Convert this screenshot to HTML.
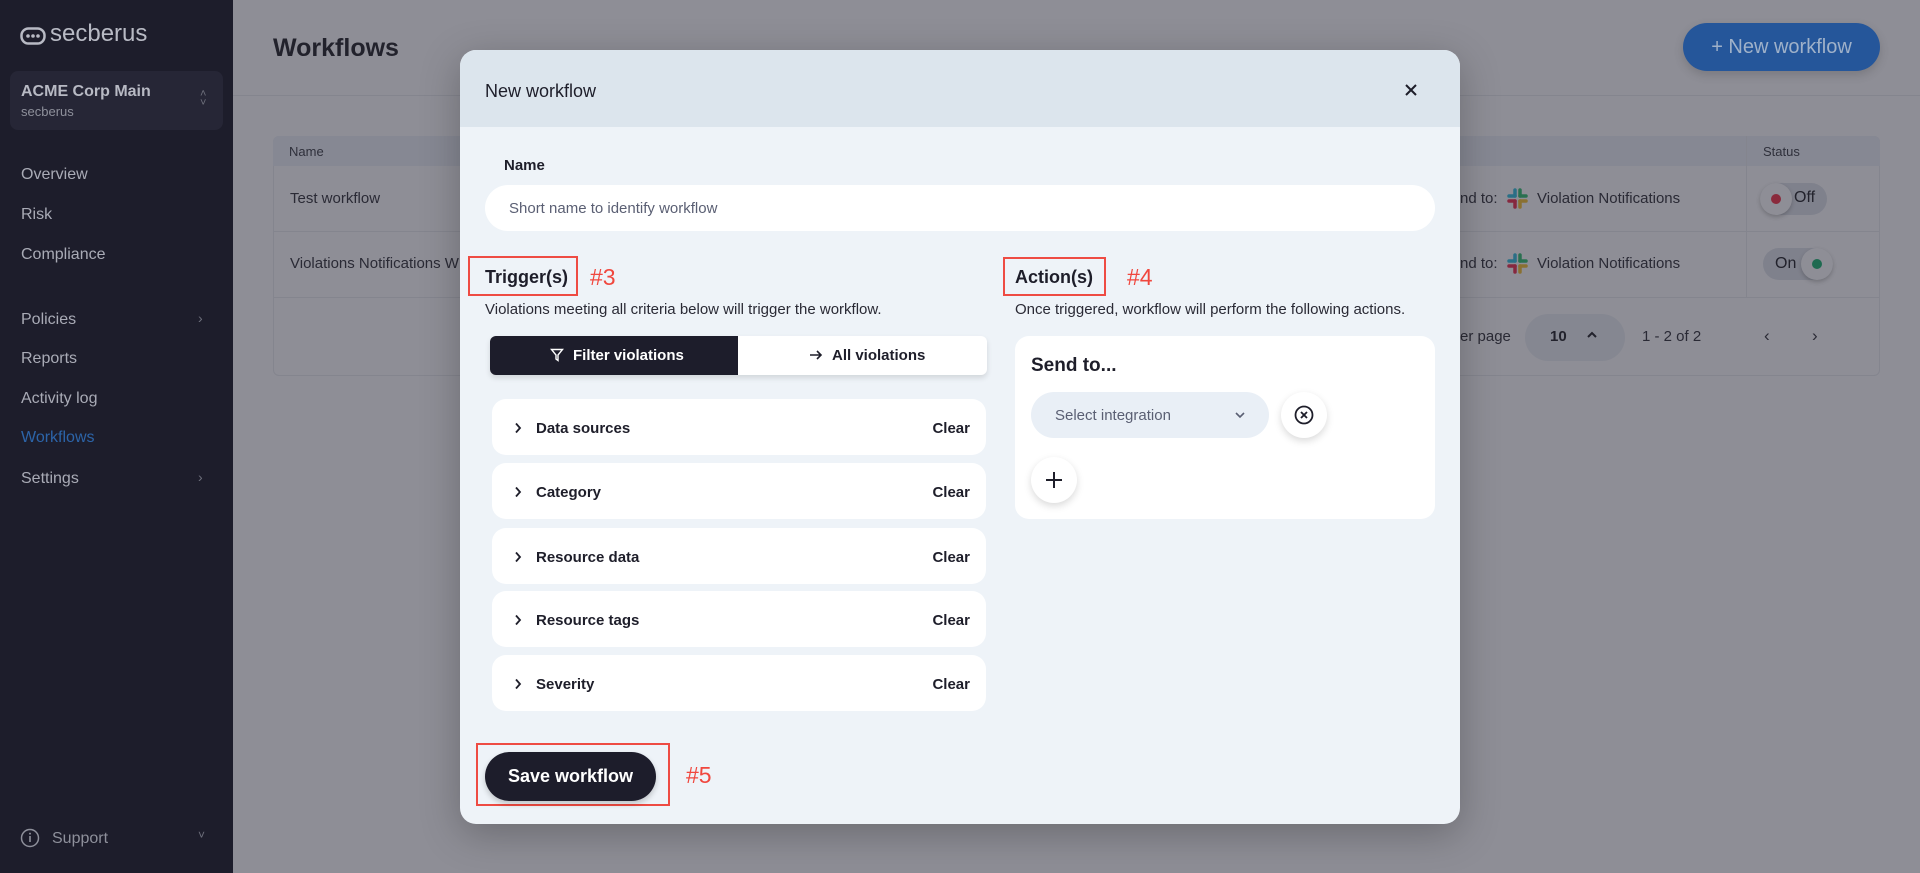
<!DOCTYPE html>
<html><head><meta charset="utf-8"><style>
*{box-sizing:border-box;margin:0;padding:0}
body{width:1920px;height:873px;overflow:hidden;position:relative;background:#8e8e96;font-family:"Liberation Sans",sans-serif;color:#1e1e2a}
.a{position:absolute;white-space:nowrap}
.side{left:0;top:0;width:233px;height:873px;background:#1d1d2b}
.nav{left:21px;font-size:16px;color:#a9abb6}
.row{left:273px;width:1607px;border-bottom:1px solid #84858e}
.modal{left:460px;top:50px;width:1000px;height:774px;background:#eef3f8;border-radius:16px;overflow:hidden;box-shadow:0 10px 40px rgba(0,0,0,.25)}
.acc{left:32px;width:494px;height:56px;background:#fff;border-radius:14px}
.acc .l{position:absolute;left:44px;top:21px;font-size:15px;font-weight:bold;color:#1e1e2a}
.acc svg{position:absolute;left:22px;top:23px}
.acc .r{position:absolute;right:16px;top:21px;font-size:15px;font-weight:bold}
.red{border:2px solid #ee4b43}
.hash{color:#f0473e;font-size:23px}
</style></head><body>
<div class="a side"></div>
<svg class="a" style="left:20px;top:26px" width="26" height="20" viewBox="0 0 26 20"><rect x="1.5" y="2.5" width="23" height="15" rx="7" fill="none" stroke="#b8bac4" stroke-width="2.5"/><circle cx="8" cy="10" r="1.8" fill="#b8bac4"/><circle cx="13" cy="10" r="1.8" fill="#b8bac4"/><circle cx="18" cy="10" r="1.8" fill="#b8bac4"/></svg>
<div class="a" style="left:50px;top:20px;font-size:24px;color:#b8bac4">secberus</div>
<div class="a" style="left:10px;top:71px;width:213px;height:59px;background:#262636;border-radius:8px"></div>
<div class="a" style="left:21px;top:83px;font-size:16px;font-weight:bold;color:#b8bac4">ACME Corp Main</div>
<div class="a" style="left:21px;top:104px;font-size:13px;color:#8e909b">secberus</div>
<div class="a" style="left:200px;top:90px;font-size:11px;color:#6e707c;line-height:9px">˄<br>˅</div>
<div class="a nav" style="top:166px">Overview</div>
<div class="a nav" style="top:206px">Risk</div>
<div class="a nav" style="top:246px">Compliance</div>
<div class="a nav" style="top:311px">Policies</div>
<div class="a nav" style="top:350px">Reports</div>
<div class="a nav" style="top:390px">Activity log</div>
<div class="a nav" style="top:429px;color:#2c64a8">Workflows</div>
<div class="a nav" style="top:470px">Settings</div>
<div class="a" style="left:198px;top:310px;color:#6e707c;font-size:14px">›</div>
<div class="a" style="left:198px;top:469px;color:#6e707c;font-size:14px">›</div>
<svg class="a" style="left:20px;top:828px" width="20" height="20"><circle cx="10" cy="10" r="8.5" fill="none" stroke="#8e909b" stroke-width="1.5"/><rect x="9.2" y="8" width="1.6" height="6" fill="#8e909b"/><circle cx="10" cy="5.6" r="1" fill="#8e909b"/></svg>
<div class="a nav" style="left:52px;top:830px;color:#8e909b">Support</div>
<div class="a" style="left:198px;top:828px;color:#6e707c;font-size:12px">˅</div>

<div class="a" style="left:273px;top:34px;font-size:25px;font-weight:bold;color:#22222c">Workflows</div>
<div class="a" style="left:233px;top:95px;width:1687px;height:1px;background:#84858e"></div>
<div class="a" style="left:1683px;top:23px;width:197px;height:48px;border-radius:24px;background:#25569a;color:#9fb1c9;font-size:20px;text-align:center;line-height:48px;box-shadow:0 4px 10px rgba(0,0,0,.15)">+ New workflow</div>
<div class="a" style="left:273px;top:136px;width:1607px;height:240px;border:1px solid #84858e;border-radius:6px"></div>
<div class="a" style="left:273px;top:136px;width:1607px;height:30px;background:#868893;border-radius:6px 6px 0 0"></div>
<div class="a" style="left:289px;top:144px;font-size:13px;color:#2f303b">Name</div>
<div class="a" style="left:1763px;top:144px;font-size:13px;color:#2f303b">Status</div>
<div class="a" style="left:1746px;top:136px;width:1px;height:161px;background:#84858e"></div>
<div class="a row" style="top:231px"></div>
<div class="a row" style="top:297px"></div>
<div class="a" style="left:290px;top:190px;font-size:15px;color:#2a2a35">Test workflow</div>
<div class="a" style="left:290px;top:255px;font-size:15px;color:#2a2a35">Violations Notifications W</div>
<div class="a" style="left:1460px;top:190px;font-size:15px;color:#2a2a35">nd to:</div>
<div class="a" style="left:1537px;top:190px;font-size:15px;color:#2a2a35">Violation Notifications</div>
<div class="a" style="left:1460px;top:255px;font-size:15px;color:#2a2a35">nd to:</div>
<div class="a" style="left:1537px;top:255px;font-size:15px;color:#2a2a35">Violation Notifications</div>
<svg class="a" style="left:1507px;top:188px" width="21" height="21"><g stroke-width="3.5" stroke-linecap="round"><path d="M8 2V8" stroke="#2a6f86"/><path d="M2 8H8" stroke="#2a6f86"/><path d="M13 2V8" stroke="#2a7050"/><path d="M13 8H19" stroke="#2a7050"/><path d="M13 13V19" stroke="#8a7030"/><path d="M13 13H19" stroke="#8a7030"/><path d="M8 13V19" stroke="#86283f"/><path d="M2 13H8" stroke="#86283f"/></g></svg>
<svg class="a" style="left:1507px;top:253px" width="21" height="21"><g stroke-width="3.5" stroke-linecap="round"><path d="M8 2V8" stroke="#2a6f86"/><path d="M2 8H8" stroke="#2a6f86"/><path d="M13 2V8" stroke="#2a7050"/><path d="M13 8H19" stroke="#2a7050"/><path d="M13 13V19" stroke="#8a7030"/><path d="M13 13H19" stroke="#8a7030"/><path d="M8 13V19" stroke="#86283f"/><path d="M2 13H8" stroke="#86283f"/></g></svg>
<div class="a" style="left:1760px;top:183px;width:67px;height:32px;border-radius:16px;background:#7f818c"></div>
<div class="a" style="left:1760px;top:183px;width:32px;height:32px;border-radius:16px;background:#8e8e96;box-shadow:0 2px 4px rgba(0,0,0,.2)"></div>
<div class="a" style="left:1771px;top:194px;width:10px;height:10px;border-radius:5px;background:#8a2a3c"></div>
<div class="a" style="left:1794px;top:189px;font-size:16px;color:#22222c">Off</div>
<div class="a" style="left:1763px;top:248px;width:70px;height:32px;border-radius:16px;background:#7f818c"></div>
<div class="a" style="left:1801px;top:248px;width:32px;height:32px;border-radius:16px;background:#8e8e96;box-shadow:0 2px 4px rgba(0,0,0,.2)"></div>
<div class="a" style="left:1812px;top:259px;width:10px;height:10px;border-radius:5px;background:#1e6a50"></div>
<div class="a" style="left:1775px;top:255px;font-size:16px;color:#22222c">On</div>
<div class="a" style="left:1460px;top:328px;font-size:15px;color:#2a2a35">er page</div>
<div class="a" style="left:1525px;top:314px;width:100px;height:47px;border-radius:24px;background:#858791"></div>
<div class="a" style="left:1550px;top:328px;font-size:15px;font-weight:bold;color:#22222c">10</div>
<svg class="a" style="left:1586px;top:330px" width="12" height="10"><path d="M2 7L6 3L10 7" fill="none" stroke="#22222c" stroke-width="2"/></svg>
<div class="a" style="left:1642px;top:328px;font-size:15px;color:#2a2a35">1 - 2 of 2</div>
<div class="a" style="left:1764px;top:326px;font-size:17px;color:#2a2a35">‹</div>
<div class="a" style="left:1812px;top:326px;font-size:17px;color:#2a2a35">›</div>

<div class="a modal">
 <div class="a" style="left:0;top:0;width:1000px;height:77px;background:#dce5ed"></div>
 <div class="a" style="left:25px;top:31px;font-size:18px">New workflow</div>
 <svg class="a" style="left:944px;top:33px" width="14" height="14"><path d="M2 2L12 12M12 2L2 12" stroke="#1e1e2a" stroke-width="2"/></svg>
 <div class="a" style="left:44px;top:107px;font-size:15px;font-weight:bold">Name</div>
 <div class="a" style="left:25px;top:135px;width:950px;height:46px;background:#fff;border-radius:23px"></div>
 <div class="a" style="left:49px;top:150px;font-size:15px;color:#5a5f73">Short name to identify workflow</div>
 <div class="a red" style="left:8px;top:206px;width:110px;height:40px"></div>
 <div class="a" style="left:25px;top:217px;font-size:18px;font-weight:bold">Trigger(s)</div>
 <div class="a hash" style="left:130px;top:214px">#3</div>
 <div class="a red" style="left:543px;top:207px;width:103px;height:39px"></div>
 <div class="a" style="left:555px;top:217px;font-size:18px;font-weight:bold">Action(s)</div>
 <div class="a hash" style="left:667px;top:214px">#4</div>
 <div class="a" style="left:25px;top:251px;font-size:15px;color:#2a2a35">Violations meeting all criteria below will trigger the workflow.</div>
 <div class="a" style="left:555px;top:251px;font-size:15px;color:#2a2a35">Once triggered, workflow will perform the following actions.</div>
 <div class="a" style="left:30px;top:286px;width:497px;height:39px;background:#fff;border-radius:6px;box-shadow:0 3px 6px rgba(0,0,0,.12)"></div>
 <div class="a" style="left:30px;top:286px;width:248px;height:39px;background:#1d1d2b;border-radius:6px 0 0 6px"></div>
 <svg class="a" style="left:90px;top:298px" width="14" height="14"><path d="M1.5 1.5H12.5L8 7V12.5L6 11V7Z" fill="none" stroke="#fff" stroke-width="1.4"/></svg>
 <div class="a" style="left:113px;top:297px;font-size:15px;font-weight:bold;color:#fff">Filter violations</div>
 <svg class="a" style="left:349px;top:299px" width="14" height="12"><path d="M1 6H12M8 2L12 6L8 10" fill="none" stroke="#1e1e2a" stroke-width="1.6"/></svg>
 <div class="a" style="left:372px;top:297px;font-size:15px;font-weight:bold">All violations</div>
 <div class="a acc" style="top:349px"><svg width="8" height="12"><path d="M2 1.5L6 6L2 10.5" fill="none" stroke="#1e1e2a" stroke-width="1.8"/></svg><span class="l">Data sources</span><span class="r">Clear</span></div>
 <div class="a acc" style="top:413px"><svg width="8" height="12"><path d="M2 1.5L6 6L2 10.5" fill="none" stroke="#1e1e2a" stroke-width="1.8"/></svg><span class="l">Category</span><span class="r">Clear</span></div>
 <div class="a acc" style="top:478px"><svg width="8" height="12"><path d="M2 1.5L6 6L2 10.5" fill="none" stroke="#1e1e2a" stroke-width="1.8"/></svg><span class="l">Resource data</span><span class="r">Clear</span></div>
 <div class="a acc" style="top:541px"><svg width="8" height="12"><path d="M2 1.5L6 6L2 10.5" fill="none" stroke="#1e1e2a" stroke-width="1.8"/></svg><span class="l">Resource tags</span><span class="r">Clear</span></div>
 <div class="a acc" style="top:605px"><svg width="8" height="12"><path d="M2 1.5L6 6L2 10.5" fill="none" stroke="#1e1e2a" stroke-width="1.8"/></svg><span class="l">Severity</span><span class="r">Clear</span></div>
 <div class="a" style="left:555px;top:286px;width:420px;height:183px;background:#fff;border-radius:14px"></div>
 <div class="a" style="left:571px;top:305px;font-size:19px;font-weight:bold">Send to...</div>
 <div class="a" style="left:571px;top:342px;width:238px;height:46px;background:#e9eff6;border-radius:23px"></div>
 <div class="a" style="left:595px;top:357px;font-size:15px;color:#5a5f73">Select integration</div>
 <svg class="a" style="left:774px;top:360px" width="12" height="10"><path d="M2 3L6 7L10 3" fill="none" stroke="#5a5f73" stroke-width="1.6"/></svg>
 <div class="a" style="left:821px;top:342px;width:46px;height:46px;border-radius:23px;background:#fff;box-shadow:0 3px 8px rgba(0,0,0,.15)"></div>
 <svg class="a" style="left:833px;top:354px" width="22" height="22"><circle cx="11" cy="11" r="8.5" fill="none" stroke="#1e1e2a" stroke-width="1.8"/><path d="M8 8L14 14M14 8L8 14" stroke="#1e1e2a" stroke-width="1.8"/></svg>
 <div class="a" style="left:571px;top:407px;width:46px;height:46px;border-radius:23px;background:#fff;box-shadow:0 3px 8px rgba(0,0,0,.15)"></div>
 <svg class="a" style="left:585px;top:421px" width="18" height="18"><path d="M9 1V17M1 9H17" stroke="#1e1e2a" stroke-width="2"/></svg>
 <div class="a red" style="left:16px;top:693px;width:194px;height:63px"></div>
 <div class="a" style="left:25px;top:702px;width:171px;height:49px;background:#1d1d2b;border-radius:25px;color:#fff;font-size:18px;font-weight:bold;text-align:center;line-height:49px;box-shadow:0 3px 6px rgba(0,0,0,.2)">Save workflow</div>
 <div class="a hash" style="left:226px;top:712px">#5</div>
</div>
</body></html>
